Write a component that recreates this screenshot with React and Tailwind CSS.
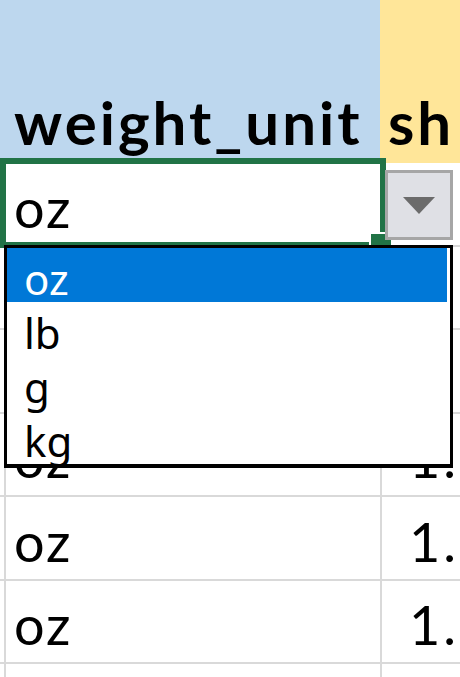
import React from "react";

const cellFont = { fontFamily: "Lato, 'Open Sans', sans-serif" };
const listFont = { fontFamily: "'Noto Sans', 'Open Sans', sans-serif" };

function Row({ a, b }) {
  return (
    <div className="flex h-[83.5px] shrink-0">
      <div className="w-[6px] shrink-0 border-r-2 border-b-2 border-[#d9d9d9]" />
      <div className="w-[376px] shrink-0 border-r-2 border-b-2 border-[#d9d9d9] flex items-end pl-[8px] pb-[10px]">
        <span className="text-[54px] leading-none tracking-[2px] text-black" style={cellFont}>{a}</span>
      </div>
      <div className="flex-1 border-b-2 border-[#d9d9d9] flex items-end pl-[27px] pb-[10px] overflow-hidden whitespace-nowrap">
        <span className="text-[54px] leading-none tracking-[3px] text-black" style={cellFont}>{b}</span>
      </div>
    </div>
  );
}

export default function App() {
  const rows = [
    { a: "oz", b: "" },
    { a: "oz", b: "1." },
    { a: "oz", b: "1." },
    { a: "oz", b: "1." },
    { a: "oz", b: "1." },
    { a: "oz", b: "1." },
    { a: "", b: "" },
  ];
  return (
    <div className="relative w-[460px] h-[677px] overflow-hidden bg-white">
      <div className="flex h-[163px]">
        <div className="w-[380px] shrink-0 bg-[#bdd7ee] flex items-end pl-[14px] pb-[11px]">
          <span className="text-[60px] leading-none font-bold tracking-[3px] text-black" style={cellFont}>weight_unit</span>
        </div>
        <div className="flex-1 bg-[#ffe699] flex items-end pl-[8px] pb-[11px] overflow-hidden whitespace-nowrap">
          <span className="text-[60px] leading-none font-bold tracking-[3px] text-black" style={cellFont}>sh</span>
        </div>
      </div>
      {rows.map((r, i) => (
        <Row key={i} a={r.a} b={r.b} />
      ))}

      {/* active cell selection */}
      <div className="absolute left-0 top-[158px] w-[386px] h-[90px] border-[6px] border-[#217346]" />
      <div className="absolute left-[369px] top-[232px] w-[24px] h-[16px] bg-white p-[2px]">
        <div className="w-full h-full bg-[#217346]" />
      </div>

      {/* dropdown button */}
      <div className="absolute left-[385px] top-[170px] w-[68px] h-[70px] border-[3px] border-[#a6a6a6] bg-[#dfe0e5] flex items-center justify-center">
        <svg width="32" height="17" viewBox="0 0 32 17">
          <polygon points="0,0 32,0 16,17" fill="#6b6b6b" />
        </svg>
      </div>

      {/* dropdown list */}
      <div className="absolute left-[4px] top-[245px] w-[449px] h-[223px] border-[3px] border-b-[4px] border-black bg-white overflow-hidden" style={listFont}>
        <div className="h-[54px] mr-[3px] bg-[#0078d7] text-white pl-[17px] text-[42px] leading-[61px]">oz</div>
        <div className="h-[54px] pl-[17px] text-[42px] leading-[61px] text-black">lb</div>
        <div className="h-[54px] pl-[17px] text-[42px] leading-[61px] text-black">g</div>
        <div className="h-[54px] pl-[17px] text-[42px] leading-[61px] text-black">kg</div>
      </div>
    </div>
  );
}
